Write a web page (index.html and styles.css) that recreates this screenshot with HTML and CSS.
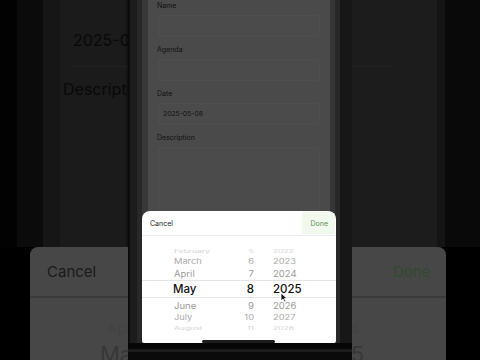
FILE: index.html
```html
<!DOCTYPE html>
<html>
<head>
<meta charset="utf-8">
<link rel="stylesheet" href="styles.css">
</head>
<body>
<div class="frame">
  <div class="side side-left">
    <div class="side-top left-top">
      <div class="b-input">2025-05-08</div>
      <div class="b-label">Description</div>
    </div>
    <div class="b-sheet b-sheet-left">
      <div class="b-head">Cancel</div>
      <div class="b-body">
        <div class="b-m1">April</div>
        <div class="b-m2">May</div>
      </div>
    </div>
  </div>

  <div class="phone">
    <div class="screen">
      <div class="form">
        <div class="field">
          <div class="label">Name</div>
          <div class="input"></div>
        </div>
        <div class="field">
          <div class="label">Agenda</div>
          <div class="input"></div>
        </div>
        <div class="field">
          <div class="label">Date</div>
          <div class="input">2025-05-08</div>
        </div>
        <div class="field">
          <div class="label">Description</div>
          <div class="input textarea"></div>
        </div>
      </div>
    </div>
    <div class="sheet">
      <div class="sheet-head">
        <span class="cancel">Cancel</span>
        <span class="done">Done</span>
      </div>
      <div class="picker">
        <div class="row r-edge"><span class="m">February</span><span class="d">5</span><span class="y">2022</span></div>
        <div class="row r-far"><span class="m">March</span><span class="d">6</span><span class="y">2023</span></div>
        <div class="row r-near r-apr"><span class="m">April</span><span class="d">7</span><span class="y">2024</span></div>
        <div class="row r-sel"><span class="m">May</span><span class="d">8</span><span class="y">2025</span></div>
        <div class="row r-near r-jun"><span class="m">June</span><span class="d">9</span><span class="y">2026</span></div>
        <div class="row r-far r-jul"><span class="m">July</span><span class="d">10</span><span class="y">2027</span></div>
        <div class="row r-edge r-aug"><span class="m">August</span><span class="d">11</span><span class="y">2028</span></div>
      </div>
    </div>
    <div class="phone-bottom"></div>
    <div class="home-bar"></div>
    <svg class="cursor" width="8" height="11" viewBox="0 0 8 11">
      <path d="M1 1 L1 9 L3 7 L4.6 10 L5.8 9.4 L4.3 6.5 L7 6.5 Z" fill="#111" stroke="#fff" stroke-width="0.8" stroke-linejoin="round"/>
    </svg>
  </div>

  <div class="side side-right">
    <div class="side-top right-top">
      <div class="b-line"></div>
    </div>
    <div class="b-sheet b-sheet-right">
      <div class="b-head b-done">Done</div>
      <div class="b-body">
        <div class="b-y1">2024</div>
        <div class="b-y2">2025</div>
      </div>
    </div>
  </div>
</div>
</body>
</html>
```

FILE: styles.css
```css
* { box-sizing: border-box; }
html, body {
  margin: 0;
  padding: 0;
  width: 480px;
  height: 360px;
  overflow: hidden;
  background: #000;
  font-family: Inter, "Noto Sans", "Liberation Sans", sans-serif;
}
.frame {
  display: flex;
  width: 480px;
  height: 360px;
}

/* blurred sides */
.side {
  width: 128px;
  height: 360px;
  display: flex;
  flex-direction: column;
  overflow: hidden;
}
.side-top {
  height: 247px;
  flex: none;
  overflow: hidden;
}
.left-top {
  background: linear-gradient(to right, #020202 0 17px, #0b0b0b 17px 43px, #161616 43px 60px, #1b1b1b 60px 126px, #121212 126px);
}
.b-input {
  margin-left: 70px;
  padding: 32px 0 0 3px;
  height: 67px;
  border-bottom: 1px solid #202020;
  font-size: 16px;
  line-height: 16px;
  color: #080808;
  white-space: nowrap;
}
.b-label {
  margin: 14px 0 0 63px;
  font-size: 16px;
  line-height: 16px;
  color: #080808;
  white-space: nowrap;
}
.b-sheet {
  flex: 1;
  background: #474747;
  overflow: hidden;
}
.b-sheet-left {
  margin-left: 30px;
  border-top-left-radius: 8px;
}
.b-head {
  height: 51px;
  display: flex;
  align-items: center;
  border-bottom: 2px solid #3a3a3a;
  font-size: 15px;
  color: #1a1a1a;
}
.b-sheet-left .b-head { padding-left: 17px; }
.b-body {
  height: 62px;
  white-space: nowrap;
}
.b-m1 {
  margin: 26px 0 0 77px;
  font-size: 15px;
  line-height: 10px;
  color: #434343;
}
.b-m2 {
  margin: 10px 0 0 70px;
  font-size: 22px;
  line-height: 20px;
  color: #373737;
}
.right-top {
  background: linear-gradient(to right, #1c1c1c 0 85px, #141414 85px 93px, #090909 93px);
}
.b-line {
  margin-top: 66px;
  width: 42px;
  border-bottom: 1px solid #212121;
}
.b-sheet-right {
  margin-right: 34px;
  border-top-right-radius: 8px;
}
.b-done {
  padding-left: 41px;
  color: #324a2f;
}
.b-y1 {
  margin: 26px 0 0 -30px;
  font-size: 15px;
  line-height: 10px;
  color: #434343;
}
.b-y2 {
  margin: 10px 0 0 -42px;
  font-size: 22px;
  line-height: 20px;
  color: #373737;
}

/* phone */
.phone {
  position: relative;
  width: 224px;
  height: 360px;
  display: flex;
  flex-direction: column;
  background: linear-gradient(to right, #0c0c0c 0 2px, #1c1c1c 2px 9px, #282828 9px 14px, #383838 14px 20px, #4a4a4a 20px 202px, #363636 202px 207px, #282828 207px 212px, #171717 212px);
}
.screen {
  height: 211px;
  flex: none;
  padding: 0 22px 0 20px;
  overflow: hidden;
}
.form {
  height: 100%;
  background: #4a4a4a;
}
.field {
  height: 44px;
}
.label {
  height: 11px;
  line-height: 11px;
  padding-left: 9px;
  font-size: 7px;
  color: #111;
}
.input {
  margin: 4px 0 0 10px;
  width: 162px;
  height: 22px;
  border: 1px solid #4f4f4f;
  background: #4b4b4b;
  border-radius: 2px;
  padding-left: 4px;
  font-size: 6.8px;
  line-height: 20px;
  color: #111;
}
.textarea {
  height: 80px;
}

.sheet {
  flex: none;
  height: 132px;
  margin: 0 16px 0 14px;
  background: #fff;
  border-radius: 8px 8px 2px 2px;
  overflow: hidden;
}
.sheet-head {
  height: 25px;
  display: flex;
  justify-content: space-between;
  align-items: stretch;
  border-bottom: 1px solid #ebebeb;
  font-size: 7px;
}
.cancel {
  display: flex;
  align-items: center;
  padding-left: 8px;
  color: #1e1e1e;
}
.done {
  display: flex;
  align-items: center;
  margin: 1px 1px 1px 0;
  padding: 0 7px 0 9px;
  background: #f1f8ee;
  color: #5f8f57;
}
.picker {
  padding-top: 10px;
}
.row {
  display: grid;
  grid-template-columns: 60px 20px auto;
  padding-left: 32px;
  white-space: nowrap;
  align-items: center;
}
.row .d { text-align: right; }
.row .y { margin-left: 19px; }
.row span { display: block; }

.r-edge {
  height: 10px;
  font-size: 8.5px;
  color: #d4d4d4;
}
.r-edge span { transform: scaleY(0.5); }
.r-far {
  height: 10px;
  font-size: 9.3px;
  color: #ababab;
}
.r-far span { transform: scaleY(0.8); }
.r-jul { height: 11px; }
.r-near {
  height: 14px;
  font-size: 9.5px;
  color: #9b9b9b;
}
.r-near span { transform: scaleY(0.93); }
.r-sel {
  height: 18px;
  border-top: 1px solid #e4e4e4;
  border-bottom: 1px solid #e4e4e4;
  font-size: 11.5px;
  font-weight: 500;
  color: #111;
}
.r-sel .m { margin-left: -1px; }

.phone-bottom {
  flex: 1;
  background: linear-gradient(to bottom, #060606 0 6px, #1b1b1b 6px 9px, #0a0a0a 9px);
}
.home-bar {
  position: absolute;
  left: 74px;
  top: 340px;
  width: 73px;
  height: 3px;
  border-radius: 2px;
  background: #1c1c1c;
}
.cursor {
  position: absolute;
  left: 152px;
  top: 292px;
}
```
